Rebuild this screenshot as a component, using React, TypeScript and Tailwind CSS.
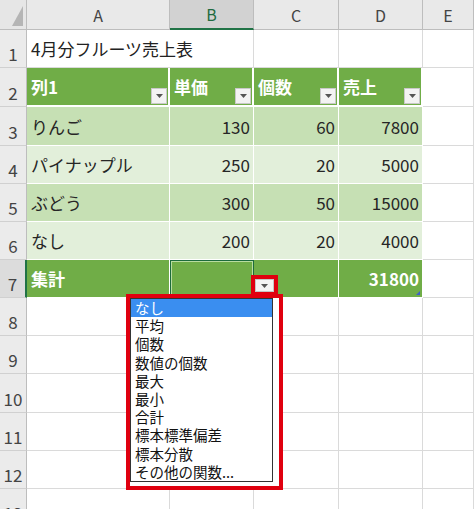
import React from 'react'

// Excel-style sheet: table with banded rows, totals row, and the
// aggregate-function dropdown opened on B7.
const FONT = { fontFamily: '"Noto Sans CJK JP", "Noto Sans", sans-serif' }

const COLS = ['A', 'B', 'C', 'D', 'E']

type Kind = 'plain' | 'head' | 'band1' | 'band2' | 'total'
type Row = { kind: Kind; cells: string[] }

const rows: Row[] = [
  { kind: 'plain', cells: ['4月分フルーツ売上表', '', '', '', ''] },
  { kind: 'head', cells: ['列1', '単価', '個数', '売上', ''] },
  { kind: 'band1', cells: ['りんご', '130', '60', '7800', ''] },
  { kind: 'band2', cells: ['パイナップル', '250', '20', '5000', ''] },
  { kind: 'band1', cells: ['ぶどう', '300', '50', '15000', ''] },
  { kind: 'band2', cells: ['なし', '200', '20', '4000', ''] },
  { kind: 'total', cells: ['集計', '', '', '31800', ''] },
  { kind: 'plain', cells: ['', '', '', '', ''] },
  { kind: 'plain', cells: ['', '', '', '', ''] },
  { kind: 'plain', cells: ['', '', '', '', ''] },
  { kind: 'plain', cells: ['', '', '', '', ''] },
  { kind: 'plain', cells: ['', '', '', '', ''] },
  { kind: 'plain', cells: ['', '', '', '', ''] },
]

const functions = ['なし', '平均', '個数', '数値の個数', '最大', '最小', '合計', '標本標準偏差', '標本分散', 'その他の関数...']

function FilterButton() {
  return (
    <div className="flex h-[16px] w-[16px] shrink-0 items-center justify-center border border-[#c9c9c9] bg-[#f3f3f3]">
      <svg width="7" height="4" viewBox="0 0 7 4">
        <path d="M0 0h7L3.5 4z" fill="#555" />
      </svg>
    </div>
  )
}

function bodyCell(kind: Kind, col: number, row: number, text: string) {
  const num = col > 0 && /^\d+$/.test(text)
  if (kind === 'plain') {
    const spill = row === 0 && col === 0
    return (
      <div
        className={`flex items-center border-b border-[#dadada] bg-white pl-1 text-[17px] leading-none text-[#222] ${
          spill ? 'overflow-visible whitespace-nowrap relative z-10' : 'border-r'
        }`}
      >
        {text}
      </div>
    )
  }
  if (kind === 'head') {
    if (col === 4) return <div className="border-r border-b border-[#dadada] bg-white" />
    return (
      <div className="flex items-center justify-between border-r-2 border-b-2 border-white bg-[#70ad47] pl-1 pr-[1px] text-[17px] font-bold leading-none text-white">
        <span>{text}</span>
        <div className="self-end mb-[1px]">
          <FilterButton />
        </div>
      </div>
    )
  }
  if (kind === 'total') {
    if (col === 4) return <div className="border-r border-b border-[#dadada] bg-white" />
    if (col === 1)
      return (
        <div className="border border-[#1d6b3c] bg-[#70ad47] shadow-[inset_0_0_0_1px_#b9dca0]" />
      )
    return (
      <div
        className={`relative flex items-center border-r border-b border-white bg-[#70ad47] text-[17px] font-bold leading-none text-white ${
          num ? 'justify-end pr-[3px]' : 'pl-1'
        }`}
      >
        {text}
        {col === 3 && (
          <svg className="absolute right-[2px] bottom-[2px]" width="4" height="4" viewBox="0 0 4 4">
            <path d="M4 0v4H0z" fill="#3f5fc8" />
          </svg>
        )}
      </div>
    )
  }
  if (col === 4) return <div className="border-r border-b border-[#dadada] bg-white" />
  return (
    <div
      className={`flex items-center border-r border-b border-white text-[17px] leading-none text-[#262626] ${
        kind === 'band1' ? 'bg-[#c6e0b4]' : 'bg-[#e2efda]'
      } ${num ? 'justify-end pr-[3px]' : 'pl-1'}`}
    >
      {text}
    </div>
  )
}

export default function App() {
  return (
    <div className="relative h-[509px] w-[474px] overflow-hidden bg-white" style={FONT}>
      <div className="grid grid-cols-[27px_143px_84px_85px_84px_51px] grid-rows-[30px_38px_39px_39px_38px_38px_38px_38px_38px_38px_39px_38px_38px_38px]">
        {/* corner */}
        <div className="flex items-end justify-end border-r border-b border-[#bdbdbd] bg-[#e6e6e6] p-[3px]">
          <svg width="11" height="20" viewBox="0 0 11 20">
            <path d="M11 0v20H0z" fill="#b5b5b5" />
          </svg>
        </div>
        {COLS.map((c) => (
          <div
            key={c}
            className={`flex items-center justify-center border-r text-[16px] leading-none ${
              c === 'B'
                ? 'border-b-2 border-r-[#bdbdbd] border-b-[#217346] bg-[#d2d2d2] text-[#1f6b41]'
                : 'border-b border-[#bdbdbd] bg-[#e9e9e9] text-[#444]'
            }`}
          >
            {c}
          </div>
        ))}

        {rows.map((r, i) => (
          <React.Fragment key={i}>
            <div
              className={`flex items-end justify-center border-b border-[#d0d0d0] pb-[5px] text-[17px] leading-none ${
                i === 6
                  ? 'border-r-2 border-r-[#217346] bg-[#dcdcdc] text-[#444]'
                  : 'border-r border-r-[#bdbdbd] bg-[#ebebeb] text-[#444]'
              }`}
            >
              {i + 1}
            </div>
            {r.cells.map((t, j) => (
              <React.Fragment key={j}>{bodyCell(r.kind, j, i, t)}</React.Fragment>
            ))}
          </React.Fragment>
        ))}
      </div>

      {/* dropdown button on B7, marked in red */}
      <div className="absolute left-[251px] top-[275px] h-[21px] w-[27px] border-4 border-[#e0000f]">
        <div className="flex h-full w-full items-center justify-center border border-[#c6c6c6] bg-[#f4f4f4]">
          <svg width="7" height="4" viewBox="0 0 7 4">
            <path d="M0 0h7L3.5 4z" fill="#555" />
          </svg>
        </div>
      </div>

      {/* function list */}
      <div className="absolute left-[126px] top-[294px] h-[196px] w-[157px] border-4 border-[#e0000f] bg-white">
        <div className="w-[143px] border border-[#333] bg-white">
          {functions.map((f, i) => (
            <div
              key={f}
              className={`h-[18.2px] pl-[4px] text-[14.5px] leading-[18.2px] ${
                i === 0 ? 'bg-[#3a8ef0] text-white' : 'text-[#111]'
              }`}
            >
              {f}
            </div>
          ))}
        </div>
      </div>
    </div>
  )
}
